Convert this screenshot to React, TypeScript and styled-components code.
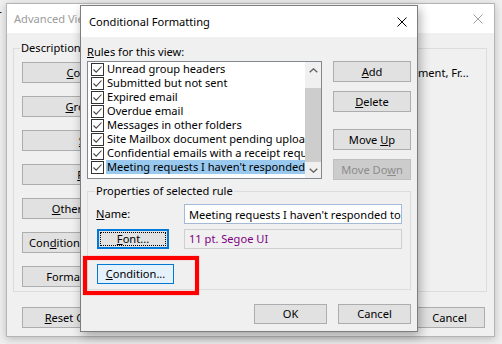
import React from "react";
import styled, { createGlobalStyle } from "styled-components";

const FONT = `"Noto Sans", "Segoe UI", "Liberation Sans", sans-serif`;
const FS = "11.1px";

const GlobalStyle = createGlobalStyle`
  html, body { margin: 0; padding: 0; }
  body { background: #efefef; font-family: ${FONT}; font-size: ${FS}; color: #000; }
  * { box-sizing: border-box; }
`;

const Desktop = styled.div`
  position: relative;
  width: 502px;
  height: 344px;
  overflow: hidden;
  background: #efefef;
`;

const StrayText = styled.span`
  position: absolute;
  left: -3px;
  top: 6px;
  font-size: ${FS};
  line-height: 16px;
`;

const Window = styled.section<{ $x: number; $y: number; $w: number; $h: number; $active?: boolean }>`
  position: absolute;
  left: ${(p) => p.$x}px;
  top: ${(p) => p.$y}px;
  width: ${(p) => p.$w}px;
  height: ${(p) => p.$h}px;
  display: flex;
  flex-direction: column;
  background: #f0f0f0;
  border: 1px solid ${(p) => (p.$active ? "#7d7d7d" : "#b5b5b5")};
  box-shadow: ${(p) =>
    p.$active ? "2px 4px 10px rgba(0,0,0,0.32)" : "0 2px 8px rgba(0,0,0,0.22)"};
`;

const TitleBar = styled.header<{ $h: number; $inactive?: boolean }>`
  flex: none;
  height: ${(p) => p.$h}px;
  background: #fff;
  display: flex;
  align-items: center;
  justify-content: space-between;
  padding: 0 ${(p) => (p.$inactive ? 11 : 10)}px 0 ${(p) => (p.$inactive ? 7 : 8)}px;
  color: ${(p) => (p.$inactive ? "#9b9b9b" : "#000")};
  font-size: ${FS};
  white-space: nowrap;
  overflow: hidden;
`;

const CloseIcon = styled.svg`
  flex: none;
  display: block;
`;

const Close = ({ color }: { color: string }) => (
  <CloseIcon width="10" height="10" viewBox="0 0 10 10">
    <path d="M0.5 0.5 L9.5 9.5 M9.5 0.5 L0.5 9.5" stroke={color} strokeWidth="1" fill="none" />
  </CloseIcon>
);

const Button = styled.button<{ $w: number; $h?: number; $disabled?: boolean }>`
  flex: none;
  width: ${(p) => p.$w}px;
  height: ${(p) => p.$h ?? 21}px;
  padding: 0;
  margin: 0;
  font-family: ${FONT};
  font-size: ${FS};
  line-height: 16px;
  color: ${(p) => (p.$disabled ? "#8c8c8c" : "#000")};
  background: ${(p) => (p.$disabled ? "#cccccc" : "#e1e1e1")};
  border: 1px solid ${(p) => (p.$disabled ? "#bfbfbf" : "#adadad")};
  white-space: nowrap;
  overflow: hidden;
`;

const FocusButton = styled(Button)`
  border: 2px solid #0078d7;
  outline: 1px dotted #000;
  outline-offset: -4px;
`;

const HoverButton = styled(Button)`
  background: #e5f1fb;
  border: 1px solid #0078d7;
`;

/* ---------- background window ---------- */

const BgBody = styled.div`
  flex: 1;
  display: flex;
  flex-direction: column;
  padding: 7px 7px 9px 6px;
`;

const GroupBox = styled.fieldset<{ $pad: string }>`
  margin: 0;
  padding: ${(p) => p.$pad};
  border: 1px solid #dcdcdc;
  min-width: 0;
`;

const Legend = styled.legend`
  padding: 0 1px;
  margin-left: -2px;
  font-size: ${FS};
  line-height: 16px;
`;

const SettingsList = styled.div`
  display: grid;
  grid-template-columns: 144px 1fr;
  column-gap: 72px;
  row-gap: 13px;
  align-items: center;
`;

const Description = styled.span`
  white-space: nowrap;
  overflow: hidden;
  line-height: 16px;
`;

const BgFooter = styled.div`
  margin-top: 15px;
  display: flex;
  justify-content: space-between;
  padding: 0 2px 0 9px;
`;

const ButtonPair = styled.div`
  display: flex;
  gap: 11px;
`;

/* ---------- Conditional Formatting dialog ---------- */

const DialogBody = styled.div`
  flex: 1;
  display: flex;
  flex-direction: column;
  padding: 7px 6px 8px 6px;
`;

const FieldLabel = styled.div`
  height: 16px;
  line-height: 16px;
  margin-bottom: 1px;
`;

const RulesRow = styled.div`
  display: flex;
  gap: 11px;
`;

const ListBox = styled.div`
  flex: none;
  width: 235px;
  height: 118px;
  border: 1px solid #828790;
  background: #fff;
  display: flex;
`;

const Rows = styled.div`
  flex: 1;
  min-width: 0;
  display: flex;
  flex-direction: column;
`;

const Row = styled.div`
  height: 14px;
  display: flex;
  align-items: center;
  padding-left: 3px;
`;

const CheckBox = styled.span`
  flex: none;
  width: 13px;
  height: 13px;
  border: 1px solid #333;
  background: #fff;
  display: flex;
`;

const RowLabel = styled.span<{ $selected?: boolean }>`
  flex: 1;
  min-width: 0;
  margin-left: 2px;
  padding-left: 1px;
  height: 14px;
  line-height: 14px;
  white-space: nowrap;
  overflow: hidden;
  background: ${(p) => (p.$selected ? "#99c9ef" : "transparent")};
`;

const ScrollBar = styled.div`
  flex: none;
  width: 16px;
  background: #f0f0f0;
  display: flex;
  flex-direction: column;
`;

const ScrollArrow = styled.div<{ $h: number }>`
  flex: none;
  height: ${(p) => p.$h}px;
  display: flex;
  align-items: center;
  justify-content: center;
`;

const Thumb = styled.div`
  flex: none;
  margin-top: 9px;
  height: 74px;
  background: #cdcdcd;
`;

const SideButtons = styled.div`
  display: flex;
  flex-direction: column;
`;

const PropsGrid = styled.div`
  display: grid;
  grid-template-columns: 80px 1fr;
  grid-auto-rows: 20px;
  column-gap: 7px;
  row-gap: 5px;
  align-items: center;
`;

const NameLabel = styled.span`
  margin-left: -1px;
  line-height: 16px;
`;

const TextInput = styled.input`
  width: 100%;
  height: 20px;
  margin: 0;
  padding: 0 0 0 4px;
  border: 1px solid #a3b9d6;
  background: #fff;
  font-family: ${FONT};
  font-size: ${FS};
  color: #000;
  outline: none;
`;

const ReadOnlyField = styled.div`
  height: 20px;
  border: 1px solid #cfcfcf;
  padding-left: 4px;
  line-height: 18px;
  color: #800080;
  white-space: nowrap;
`;

const ConditionRow = styled.div`
  margin-top: 15px;
  display: flex;
`;

const Footer = styled.div`
  margin-top: 14px;
  display: flex;
  justify-content: flex-end;
  gap: 11px;
`;

const Annotation = styled.div`
  position: absolute;
  left: 2px;
  top: 250px;
  width: 116px;
  height: 39px;
  border: 4px solid #ff0000;
  box-shadow: 0 0 1px rgba(255, 0, 0, 0.6), inset 0 0 1px rgba(255, 0, 0, 0.6);
  pointer-events: none;
`;

const Check = () => (
  <svg width="11" height="11" viewBox="0 0 11 11">
    <path d="M1.5 5.5 L4.2 8.2 L9.5 2.5" stroke="#444" strokeWidth="1.1" fill="none" />
  </svg>
);

const Chevron = ({ up }: { up?: boolean }) => (
  <svg width="9" height="5" viewBox="0 0 9 5">
    <path
      d={up ? "M0.7 4.3 L4.5 0.8 L8.3 4.3" : "M0.7 0.7 L4.5 4.2 L8.3 0.7"}
      stroke="#606060"
      strokeWidth="1.3"
      fill="none"
    />
  </svg>
);

const rules = [
  "Unread group headers",
  "Submitted but not sent",
  "Expired email",
  "Overdue email",
  "Messages in other folders",
  "Site Mailbox document pending upload",
  "Confidential emails with a receipt request",
  "Meeting requests I haven't responded to",
];

const settings: { label: React.ReactNode; desc: string }[] = [
  { label: <><u>C</u>olumns...</>, desc: "Reminder, Icon, Flag Status, Attachment, Fr..." },
  { label: <><u>G</u>roup By...</>, desc: "None" },
  { label: <><u>S</u>ort...</>, desc: "Received" },
  { label: <><u>F</u>ilter...</>, desc: "Off" },
  { label: <><u>O</u>ther Settings...</>, desc: "Fonts" },
  { label: <>Con<u>d</u>itional Formatting...</>, desc: "" },
  { label: <>Format <u>C</u>olumns...</>, desc: "" },
];

export default function App() {
  return (
    <Desktop>
      <GlobalStyle />
      <StrayText>r</StrayText>

      <Window $x={6} $y={3} $w={489} $h={334}>
        <TitleBar $h={29} $inactive>
          <span>Advanced View Settings: Compact</span>
          <Close color="#a0a0a0" />
        </TitleBar>
        <BgBody>
          <GroupBox $pad="6px 14px 4px 8px">
            <Legend>Description</Legend>
            <SettingsList>
              {settings.map((s, i) => (
                <React.Fragment key={i}>
                  <Button $w={144}>{s.label}</Button>
                  <Description>{s.desc}</Description>
                </React.Fragment>
              ))}
            </SettingsList>
          </GroupBox>
          <BgFooter>
            <Button $w={144}>
              <u>R</u>eset Current View
            </Button>
            <ButtonPair>
              <Button $w={71}>OK</Button>
              <Button $w={71}>Cancel</Button>
            </ButtonPair>
          </BgFooter>
        </BgBody>
      </Window>

      <Window $x={80} $y={5} $w={338} $h={327} $active>
        <TitleBar $h={31}>
          <span>Conditional Formatting</span>
          <Close color="#000" />
        </TitleBar>
        <DialogBody>
          <FieldLabel>
            <u>R</u>ules for this view:
          </FieldLabel>
          <RulesRow>
            <ListBox>
              <Rows>
                {rules.map((r, i) => (
                  <Row key={r}>
                    <CheckBox>
                      <Check />
                    </CheckBox>
                    <RowLabel $selected={i === rules.length - 1}>{r}</RowLabel>
                  </Row>
                ))}
              </Rows>
              <ScrollBar>
                <ScrollArrow $h={17}>
                  <Chevron up />
                </ScrollArrow>
                <Thumb />
                <ScrollArrow $h={16}>
                  <Chevron />
                </ScrollArrow>
              </ScrollBar>
            </ListBox>
            <SideButtons>
              <Button $w={78}>
                <u>A</u>dd
              </Button>
              <Button $w={78} style={{ marginTop: 9 }}>
                <u>D</u>elete
              </Button>
              <Button $w={78} style={{ marginTop: 17 }}>
                Move <u>U</u>p
              </Button>
              <Button $w={78} $disabled style={{ marginTop: 9 }}>
                Move Do<u>w</u>n
              </Button>
            </SideButtons>
          </RulesRow>

          <GroupBox $pad="5px 8px 5px 9px" style={{ marginTop: 3 }}>
            <Legend>Properties of selected rule</Legend>
            <PropsGrid>
              <NameLabel>
                <u>N</u>ame:
              </NameLabel>
              <TextInput readOnly value="Meeting requests I haven't responded to" />
              <FocusButton $w={72} $h={20}>
                <u>F</u>ont...
              </FocusButton>
              <ReadOnlyField>11 pt. Segoe UI</ReadOnlyField>
            </PropsGrid>
            <ConditionRow>
              <HoverButton $w={77} $h={20}>
                <u>C</u>ondition...
              </HoverButton>
            </ConditionRow>
          </GroupBox>

          <Footer>
            <Button $w={73} $h={20}>OK</Button>
            <Button $w={73} $h={20}>Cancel</Button>
          </Footer>
        </DialogBody>
        <Annotation />
      </Window>
    </Desktop>
  );
}
